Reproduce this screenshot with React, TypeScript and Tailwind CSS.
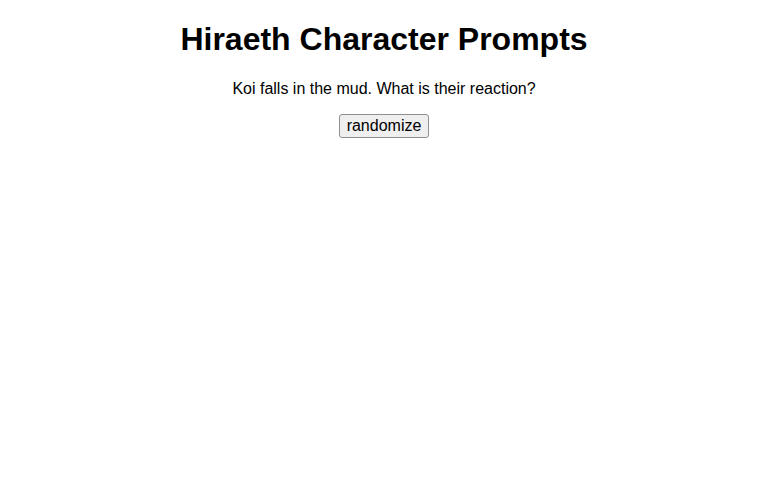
import { useState } from "react";

const prompts = [
  "Koi falls in the mud. What is their reaction?",
  "Koi finds a lost letter. What do they do with it?",
  "Koi is offered a second chance. Do they take it?",
];

export default function App() {
  const [index, setIndex] = useState(0);

  const randomize = () => {
    setIndex((i) => (i + 1 + Math.floor(Math.random() * (prompts.length - 1))) % prompts.length);
  };

  return (
    <div className="min-h-screen bg-white text-center font-['Liberation_Sans',Arial,sans-serif] text-black">
      <h1 className="my-[21.44px] text-[32px] font-bold leading-[normal]">
        Hiraeth Character Prompts
      </h1>
      <p className="my-4 text-base leading-[normal]">{prompts[index]}</p>
      <button
        type="button"
        onClick={randomize}
        className="rounded-[3px] border border-[#8f8f8f] bg-[#efefef] px-[7px] py-[2px] text-base leading-[normal] text-black hover:bg-[#e5e5e5]"
      >
        randomize
      </button>
    </div>
  );
}
